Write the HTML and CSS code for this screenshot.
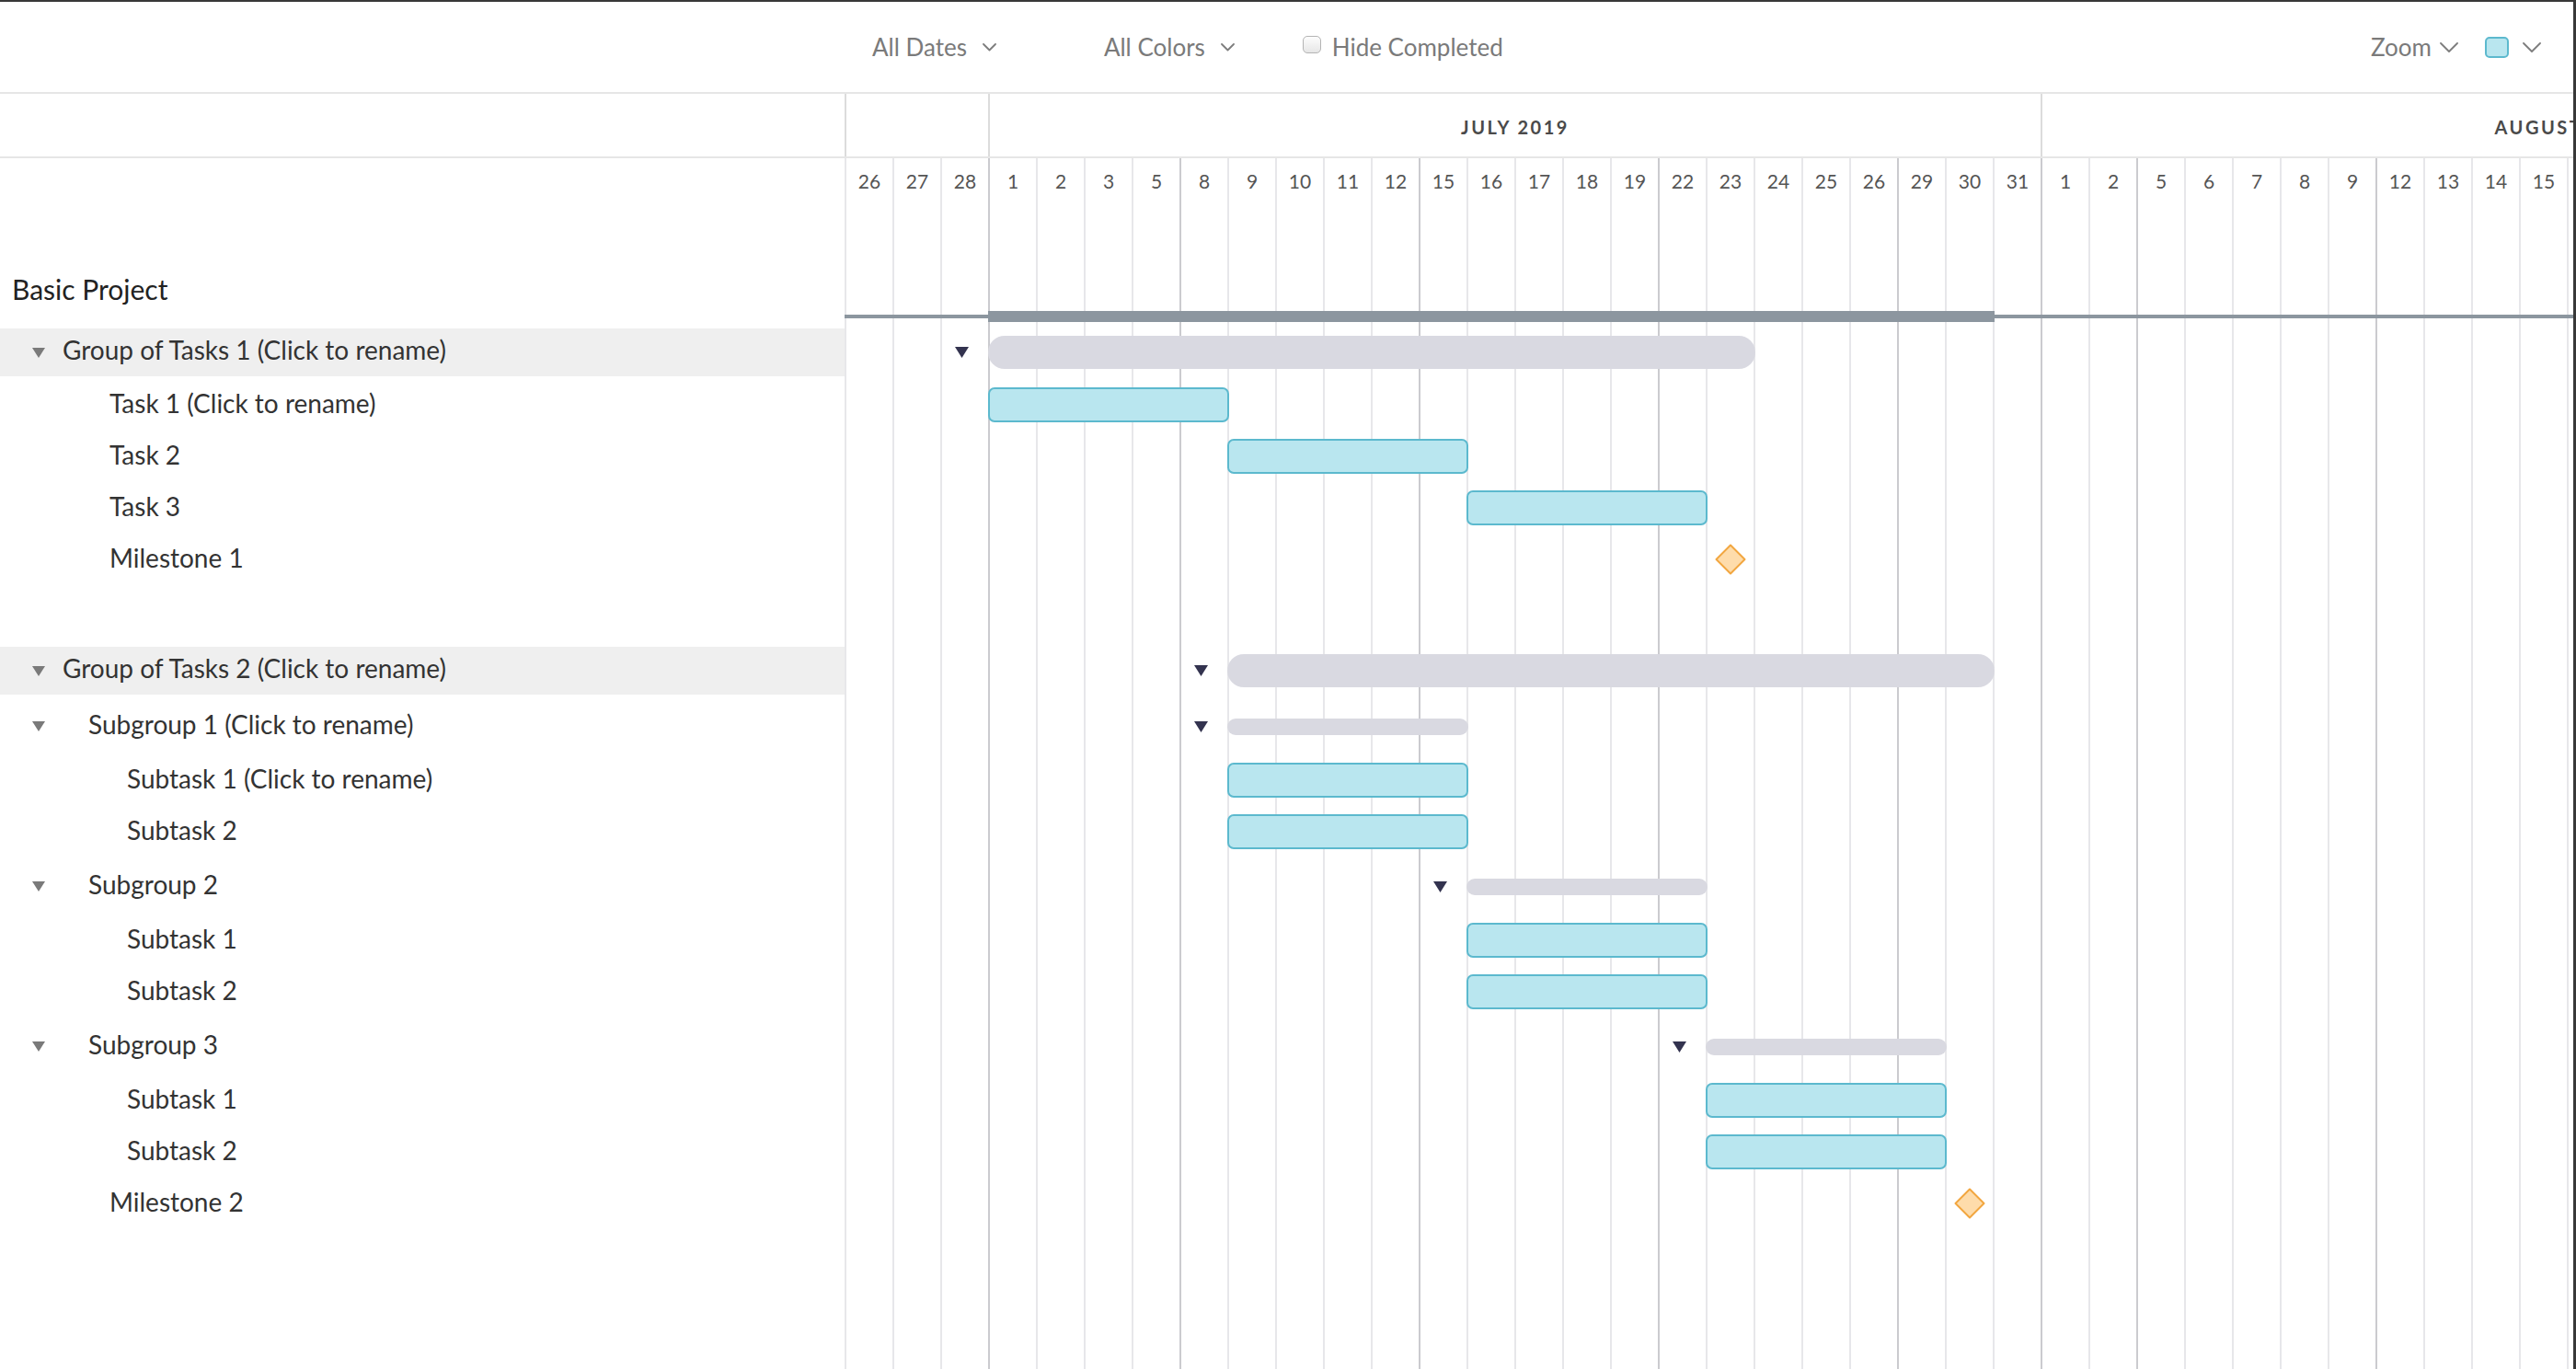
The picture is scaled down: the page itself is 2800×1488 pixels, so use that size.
FILE: index.html
```html
<!DOCTYPE html>
<html lang="en">
<head>
<meta charset="utf-8">
<title>Gantt</title>
<link rel="stylesheet" href="styles.css">
</head>
<body>
<div class="app">
  <header class="toolbar">
    <div class="toolbar-spacer"></div>
    <div class="filter">All Dates<svg class="chev" viewBox="0 0 15 9"><polyline points="1,1 7.5,7.5 14,1"/></svg></div>
    <div class="filter filter-colors">All Colors<svg class="chev" viewBox="0 0 15 9"><polyline points="1,1 7.5,7.5 14,1"/></svg></div>
    <div class="filter filter-hide"><span class="checkbox"></span>Hide Completed</div>
    <div class="toolbar-right">
      <div class="filter">Zoom<svg class="chev chev-lg" viewBox="0 0 20 11"><polyline points="1,1 10,10 19,1"/></svg></div>
      <span class="swatch"></span>
      <svg class="chev chev-lg chev-swatch" viewBox="0 0 20 11"><polyline points="1,1 10,10 19,1"/></svg>
    </div>
  </header>

  <div class="gantt">
    <div class="month-l"></div>
    <div class="months">
      <div class="month" style="width:156px"></div>
      <div class="month" style="width:1144px">JULY 2019</div>
      <div class="month" style="width:1144px">AUGUST 2019</div>
    </div>

    <div class="day-l"></div>
    <div class="days tl">
      <span>26</span><span>27</span><span>28</span><span>1</span><span>2</span><span>3</span><span>5</span><span>8</span><span>9</span><span>10</span><span>11</span><span>12</span><span>15</span><span>16</span><span>17</span><span>18</span><span>19</span><span>22</span><span>23</span><span>24</span><span>25</span><span>26</span><span>29</span><span>30</span><span>31</span><span>1</span><span>2</span><span>5</span><span>6</span><span>7</span><span>8</span><span>9</span><span>12</span><span>13</span><span>14</span><span>15</span>
    </div>

    <div class="project-l">Basic Project</div>
    <div class="project-r tl"><div class="project-track"><div class="project-bar" style="margin-left:156px;width:1094px"></div></div></div>

    <!-- Group 1 -->
    <div class="row row-group lhs"><div class="band"><svg class="tri-light" viewBox="0 0 14 11"><path d="M0 0H14L7 11Z"/></svg><span class="lbl-group">Group of Tasks 1 (Click to rename)</span></div></div>
    <div class="row row-group tl"><div class="lead" style="margin-left:120px"><svg class="tri-dark" viewBox="0 0 15 12"><path d="M0 0H15L7.5 12Z"/></svg><div class="bar-group" style="width:834px"></div></div></div>

    <div class="row row-task lhs lbl-task">Task 1 (Click to rename)</div>
    <div class="row row-task tl"><div class="bar-task" style="margin-left:156px;width:262px"></div></div>

    <div class="row row-task lhs lbl-task">Task 2</div>
    <div class="row row-task tl"><div class="bar-task" style="margin-left:416px;width:262px"></div></div>

    <div class="row row-task lhs lbl-task">Task 3</div>
    <div class="row row-task tl"><div class="bar-task" style="margin-left:676px;width:262px"></div></div>

    <div class="row row-task lhs lbl-task">Milestone 1</div>
    <div class="row row-task tl"><svg class="milestone" style="margin-left:946px" viewBox="0 0 34 34"><polygon points="17,1.5 32.5,17 17,32.5 1.5,17"/></svg></div>

    <div class="row row-blank"></div>
    <div class="row row-blank tl"></div>

    <!-- Group 2 -->
    <div class="row row-group lhs"><div class="band"><svg class="tri-light" viewBox="0 0 14 11"><path d="M0 0H14L7 11Z"/></svg><span class="lbl-group">Group of Tasks 2 (Click to rename)</span></div></div>
    <div class="row row-group tl"><div class="lead" style="margin-left:380px"><svg class="tri-dark" viewBox="0 0 15 12"><path d="M0 0H15L7.5 12Z"/></svg><div class="bar-group" style="width:834px"></div></div></div>

    <div class="row row-sub lhs lbl-sub-row"><svg class="tri-light" viewBox="0 0 14 11"><path d="M0 0H14L7 11Z"/></svg><span class="lbl-sub">Subgroup 1 (Click to rename)</span></div>
    <div class="row row-sub tl"><div class="lead" style="margin-left:380px"><svg class="tri-dark" viewBox="0 0 15 12"><path d="M0 0H15L7.5 12Z"/></svg><div class="bar-sub" style="width:262px"></div></div></div>

    <div class="row row-task lhs lbl-subtask">Subtask 1 (Click to rename)</div>
    <div class="row row-task tl"><div class="bar-task" style="margin-left:416px;width:262px"></div></div>

    <div class="row row-task lhs lbl-subtask">Subtask 2</div>
    <div class="row row-task tl"><div class="bar-task" style="margin-left:416px;width:262px"></div></div>

    <div class="row row-sub lhs lbl-sub-row"><svg class="tri-light" viewBox="0 0 14 11"><path d="M0 0H14L7 11Z"/></svg><span class="lbl-sub">Subgroup 2</span></div>
    <div class="row row-sub tl"><div class="lead" style="margin-left:640px"><svg class="tri-dark" viewBox="0 0 15 12"><path d="M0 0H15L7.5 12Z"/></svg><div class="bar-sub" style="width:262px"></div></div></div>

    <div class="row row-task lhs lbl-subtask">Subtask 1</div>
    <div class="row row-task tl"><div class="bar-task" style="margin-left:676px;width:262px"></div></div>

    <div class="row row-task lhs lbl-subtask">Subtask 2</div>
    <div class="row row-task tl"><div class="bar-task" style="margin-left:676px;width:262px"></div></div>

    <div class="row row-sub lhs lbl-sub-row"><svg class="tri-light" viewBox="0 0 14 11"><path d="M0 0H14L7 11Z"/></svg><span class="lbl-sub">Subgroup 3</span></div>
    <div class="row row-sub tl"><div class="lead" style="margin-left:900px"><svg class="tri-dark" viewBox="0 0 15 12"><path d="M0 0H15L7.5 12Z"/></svg><div class="bar-sub" style="width:262px"></div></div></div>

    <div class="row row-task lhs lbl-subtask">Subtask 1</div>
    <div class="row row-task tl"><div class="bar-task" style="margin-left:936px;width:262px"></div></div>

    <div class="row row-task lhs lbl-subtask">Subtask 2</div>
    <div class="row row-task tl"><div class="bar-task" style="margin-left:936px;width:262px"></div></div>

    <div class="row row-task lhs lbl-task">Milestone 2</div>
    <div class="row row-task tl"><svg class="milestone" style="margin-left:1206px" viewBox="0 0 34 34"><polygon points="17,1.5 32.5,17 17,32.5 1.5,17"/></svg></div>

    <div class="filler"></div>
    <div class="filler tl"></div>
  </div>
</div>
</body>
</html>
```

FILE: styles.css
```css
* {
  box-sizing: border-box;
  margin: 0;
  padding: 0;
}

html,
body {
  width: 2800px;
  height: 1488px;
  overflow: hidden;
  background: #ffffff;
}

body {
  font-family: Lato, "Open Sans", "DejaVu Sans", sans-serif;
  color: #333333;
}

.app {
  width: 2800px;
  height: 1488px;
  display: flex;
  flex-direction: column;
  border-top: 2px solid #383838;
  border-right: 3px solid #383838;
}

/* ---------- toolbar ---------- */
.toolbar {
  flex: none;
  height: 100px;
  display: flex;
  align-items: center;
  border-bottom: 2px solid #e6e6e6;
  font-size: 26px;
  color: #7a7a7a;
}

.toolbar-spacer {
  flex: none;
  width: 948px;
}

.filter {
  display: flex;
  align-items: center;
  white-space: nowrap;
}

.filter-colors {
  margin-left: 117px;
}

.filter-hide {
  margin-left: 74px;
}

.chev {
  width: 15px;
  height: 9px;
  margin-left: 17px;
  fill: none;
  stroke: #7d7d7d;
  stroke-width: 1.8;
  stroke-linecap: round;
  stroke-linejoin: round;
}

.chev-lg {
  width: 20px;
  height: 11px;
  margin-left: 9px;
}

.chev-swatch {
  margin-left: 15px;
}

.checkbox {
  width: 20px;
  height: 19px;
  margin-right: 12px;
  margin-top: -6px;
  border: 1.5px solid #b4b4b4;
  border-radius: 5px;
  background: linear-gradient(#fdfdfd, #e6e6e6);
}

.toolbar-right {
  margin-left: auto;
  padding-right: 35px;
  display: flex;
  align-items: center;
}

.swatch {
  width: 26px;
  height: 23px;
  margin-left: 29px;
  border: 2px solid #5cb9ce;
  border-radius: 5px;
  background: #b9e6ef;
}

/* ---------- gantt grid ---------- */
.gantt {
  flex: 1;
  display: grid;
  grid-template-columns: 918px 1879px;
  grid-template-rows: repeat(20, auto) 1fr;
}

.tl {
  background-image:
    linear-gradient(#cbcbcf, #cbcbcf),
    linear-gradient(#cbcbcf, #cbcbcf),
    linear-gradient(#cbcbcf, #cbcbcf),
    linear-gradient(#cbcbcf, #cbcbcf),
    linear-gradient(#cbcbcf, #cbcbcf),
    linear-gradient(#cbcbcf, #cbcbcf),
    linear-gradient(#cbcbcf, #cbcbcf),
    linear-gradient(#cbcbcf, #cbcbcf),
    repeating-linear-gradient(to right, #e7e7ea 0 2px, transparent 2px 52px);
  background-size: 2px 100%, 2px 100%, 2px 100%, 2px 100%, 2px 100%, 2px 100%, 2px 100%, 2px 100%, 100% 100%;
  background-position: 156px 0, 364px 0, 624px 0, 884px 0, 1144px 0, 1300px 0, 1404px 0, 1664px 0, 0 0;
  background-repeat: no-repeat;
}

.month-l {
  height: 70px;
  border-bottom: 2px solid #e6e6e6;
}

.months {
  height: 70px;
  display: flex;
  overflow: hidden;
  border-bottom: 2px solid #e6e6e6;
}

.month {
  flex: none;
  display: flex;
  align-items: center;
  justify-content: center;
  padding-top: 3px;
  border-left: 2px solid #dcdcdc;
  font-size: 20px;
  font-weight: 700;
  letter-spacing: 2.5px;
  color: #4a4a4a;
  white-space: nowrap;
}

.day-l {
  height: 50px;
}

.days {
  height: 50px;
  display: flex;
  overflow: hidden;
}

.days span {
  flex: none;
  width: 52px;
  padding-left: 2px;
  text-align: center;
  line-height: 50px;
  font-size: 21px;
  color: #555555;
}

.project-l {
  height: 130px;
  display: flex;
  align-items: flex-end;
  padding: 0 0 22px 13px;
  font-size: 30px;
  line-height: 32px;
  color: #222222;
}

.project-r {
  height: 130px;
  display: flex;
  align-items: flex-end;
  padding-bottom: 2px;
}

.project-track {
  width: 100%;
  height: 12px;
  display: flex;
  background: linear-gradient(to bottom, transparent 4px, #8c969f 4px, #8c969f 8px, transparent 8px);
}

.project-bar {
  height: 12px;
  background: #8c969f;
}

/* ---------- rows ---------- */
.row {
  display: flex;
  align-items: center;
  font-size: 28px;
  color: #333333;
  white-space: nowrap;
}

.row-group {
  height: 60px;
  padding-top: 2px;
}

.row-sub {
  height: 62px;
  padding-top: 2px;
}

.row-task {
  height: 56px;
}

.row-blank {
  height: 62px;
}

.lhs.row-task {
  padding-bottom: 4px;
}

.lhs.row-sub {
  padding-top: 0;
}

.band {
  width: 100%;
  height: 52px;
  display: flex;
  align-items: center;
  padding-left: 35px;
  background: #efefef;
}

.tri-light {
  flex: none;
  width: 14px;
  height: 11px;
  fill: #7a7a7a;
}

.lbl-group {
  margin-left: 19px;
  padding-bottom: 6px;
}

.lbl-sub-row {
  padding-left: 35px;
}

.lbl-sub {
  margin-left: 47px;
  padding-bottom: 4px;
}

.lbl-task {
  padding-left: 119px;
}

.lbl-subtask {
  padding-left: 138px;
}

.lead {
  display: flex;
  align-items: center;
  gap: 21px;
}

.tri-dark {
  flex: none;
  width: 15px;
  height: 12px;
  fill: #33334f;
}

.bar-group {
  flex: none;
  height: 36px;
  border-radius: 18px;
  background: #d9d9e1;
}

.bar-sub {
  flex: none;
  height: 18px;
  border-radius: 9px;
  background: #d9d9e1;
}

.bar-task {
  flex: none;
  height: 38px;
  border: 2px solid #5cb9ce;
  border-radius: 7px;
  background: #b9e6ef;
}

.milestone {
  flex: none;
  width: 34px;
  height: 34px;
  fill: #fedcab;
  stroke: #f2a63f;
  stroke-width: 2;
  stroke-linejoin: round;
}

.filler {
  min-height: 0;
}
```
